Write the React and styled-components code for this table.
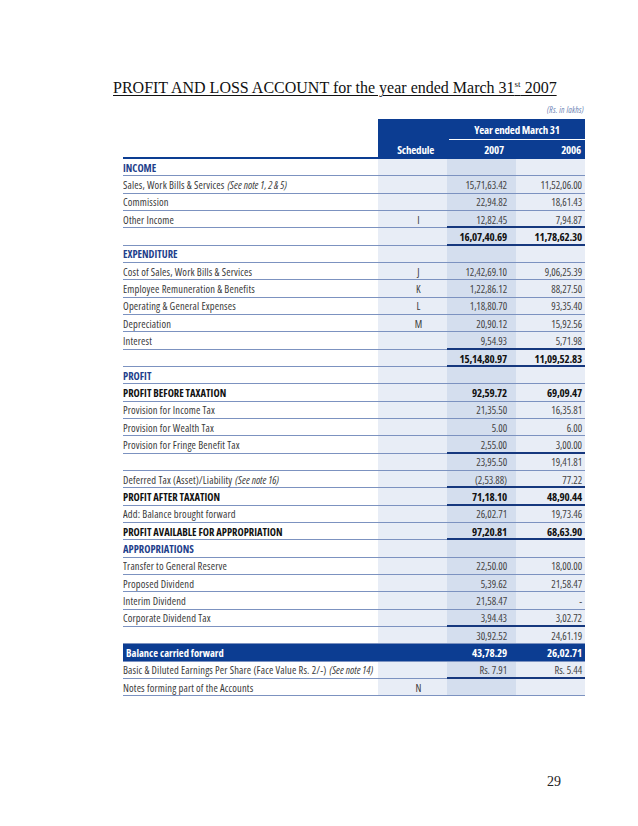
import styled, { createGlobalStyle } from "styled-components";

const GlobalStyle = createGlobalStyle`
  body {
    margin: 0;
    background: #ffffff;
  }
`;

const BLUE = "#0c3d92";
const THIN = "#7c92c0";
const THICK = "#16387e";
const COL = "#e8edf6";
const COL_DARK = "#d4deee";

const rows = [
  { kind: "section", label: "INCOME" },
  { label: "Sales, Work Bills & Services", note: "(See note 1, 2 & 5)", a: "15,71,63.42", b: "11,52,06.00" },
  { label: "Commission", a: "22,94.82", b: "18,61.43" },
  { label: "Other Income", sched: "I", a: "12,82.45", b: "7,94.87", rule: true },
  { kind: "total", a: "16,07,40.69", b: "11,78,62.30", rule: true },
  { kind: "section", label: "EXPENDITURE" },
  { label: "Cost of Sales, Work Bills & Services", sched: "J", a: "12,42,69.10", b: "9,06,25.39" },
  { label: "Employee Remuneration & Benefits", sched: "K", a: "1,22,86.12", b: "88,27.50" },
  { label: "Operating & General Expenses", sched: "L", a: "1,18,80.70", b: "93,35.40" },
  { label: "Depreciation", sched: "M", a: "20,90.12", b: "15,92.56" },
  { label: "Interest", a: "9,54.93", b: "5,71.98", rule: true },
  { kind: "total", a: "15,14,80.97", b: "11,09,52.83", rule: true },
  { kind: "section", label: "PROFIT" },
  { kind: "bold", label: "PROFIT BEFORE TAXATION", a: "92,59.72", b: "69,09.47" },
  { label: "Provision for Income Tax", a: "21,35.50", b: "16,35.81" },
  { label: "Provision for Wealth Tax", a: "5.00", b: "6.00" },
  { label: "Provision for Fringe Benefit Tax", a: "2,55.00", b: "3,00.00", rule: true },
  { a: "23,95.50", b: "19,41.81" },
  { label: "Deferred Tax (Asset)/Liability", note: "(See note 16)", a: "(2,53.88)", b: "77.22", rule: true },
  { kind: "bold", label: "PROFIT AFTER TAXATION", a: "71,18.10", b: "48,90.44", rule: true },
  { label: "Add: Balance brought forward", a: "26,02.71", b: "19,73.46" },
  { kind: "bold", label: "PROFIT AVAILABLE FOR APPROPRIATION", a: "97,20.81", b: "68,63.90", rule: true },
  { kind: "section", label: "APPROPRIATIONS" },
  { label: "Transfer to General Reserve", a: "22,50.00", b: "18,00.00" },
  { label: "Proposed Dividend", a: "5,39.62", b: "21,58.47" },
  { label: "Interim Dividend", a: "21,58.47", b: "-" },
  { label: "Corporate Dividend Tax", a: "3,94.43", b: "3,02.72", rule: true },
  { a: "30,92.52", b: "24,61.19" },
  { kind: "band", label: "Balance carried forward", a: "43,78.29", b: "26,02.71" },
  { label: "Basic & Diluted Earnings Per Share (Face Value Rs. 2/-)", note: "(See note 14)", a: "Rs. 7.91", b: "Rs. 5.44", rule: true },
  { label: "Notes forming part of the Accounts", sched: "N" },
];

const Page = styled.div`
  width: 638px;
  height: 826px;
  box-sizing: border-box;
  padding: 77px 0 0 113px;
  font-family: "Open Sans", "DejaVu Sans Condensed", sans-serif;
  font-stretch: 75%;
  position: relative;
`;

const Title = styled.h1`
  margin: 0;
  font-family: "Liberation Serif", "Times New Roman", serif;
  font-stretch: normal;
  font-weight: normal;
  font-size: 16px;
  line-height: 22px;
  color: #111;
  text-decoration: underline;
  text-underline-offset: 2px;
  text-decoration-thickness: 1px;
  sup {
    font-size: 9px;
    vertical-align: 6px;
    line-height: 0;
  }
`;

const Sheet = styled.div`
  width: 462px;
  margin: 5px 0 0 10px;
`;

const Unit = styled.div`
  text-align: right;
  font-style: italic;
  font-size: 8.5px;
  line-height: 12px;
  color: #6f86b6;
  padding-right: 1px;
  letter-spacing: 0.2px;
`;

const Head = styled.div`
  display: grid;
  grid-template-columns: 255px 69px 69px 69px;
  grid-template-rows: 21px 19px;
  margin-top: 3px;
`;

const HeadBlank = styled.div`
  grid-column: 1;
  grid-row: 1 / 3;
  box-shadow: inset 0 -2px 0 ${BLUE};
`;

const HeadBlue = styled.div`
  grid-column: ${(p) => p.$col};
  grid-row: ${(p) => p.$row};
  background: ${BLUE};
  color: #ffffff;
  font-weight: bold;
  font-size: 11px;
  letter-spacing: -0.2px;
  display: flex;
  align-items: center;
  justify-content: ${(p) => (p.$center ? "center" : "flex-end")};
  padding-right: ${(p) => p.$pad || 0}px;
`;

const YearSpan = styled.span`
  display: block;
  width: 136px;
  margin-left: 2px;
  text-align: center;
  line-height: 19px;
  border-bottom: 2px solid #ffffff;
  margin-top: 2px;
`;

const Row = styled.div`
  display: grid;
  grid-template-columns: 255px 69px 69px 69px;
  height: 17.33px;
  color: ${(p) => (p.$band ? "#ffffff" : "#3a3a3a")};
  background: ${(p) => (p.$band ? BLUE : "transparent")};
`;

const Cell = styled.div`
  display: flex;
  align-items: center;
  white-space: nowrap;
  overflow: hidden;
  background: ${(p) => (p.$band ? "transparent" : p.$bg || "transparent")};
  box-shadow: inset 0 -${(p) => (p.$thick ? 2 : 1)}px 0 ${(p) => (p.$thick ? THICK : THIN)};
  justify-content: ${(p) => p.$align || "flex-start"};
  padding-right: ${(p) => p.$pad || 0}px;
  padding-left: ${(p) => p.$padl || 0}px;
  font-weight: ${(p) => (p.$bold ? "bold" : "normal")};
  font-size: ${(p) => (p.$num && p.$bold ? 11 : 10.5)}px;
  letter-spacing: ${(p) => (p.$num ? (p.$bold ? "-0.2px" : "-0.1px") : p.$bold ? "0px" : "0.15px")};
  color: ${(p) => p.$color || "inherit"};
`;

const Note = styled.em`
  margin-left: 3px;
  font-size: 10.5px;
  letter-spacing: 0;
`;

const PageNo = styled.div`
  position: absolute;
  left: 547px;
  top: 774px;
  font-family: "Liberation Serif", "Times New Roman", serif;
  font-stretch: normal;
  font-size: 14px;
  color: #222;
`;

function LineRow({ r }) {
  const band = r.kind === "band";
  const section = r.kind === "section";
  const bold = r.kind === "bold" || r.kind === "total" || band;
  const numColor = band ? "#fff" : bold ? "#111" : "#444";
  return (
    <Row $band={band}>
      <Cell
        $bold={bold || section}
        $color={section ? "#1f3f8c" : band ? "#fff" : bold ? "#111" : undefined}
        $padl={band ? 3 : 0}
      >
        {r.label}
        {r.note && <Note>{r.note}</Note>}
      </Cell>
      <Cell $bg={COL} $band={band} $align="center" $padl={12}>
        {r.sched}
      </Cell>
      <Cell $num $bg={COL_DARK} $band={band} $align="flex-end" $pad={9} $bold={bold} $thick={r.rule} $color={numColor}>
        {r.a}
      </Cell>
      <Cell $num $bg={COL} $band={band} $align="flex-end" $pad={3} $bold={bold} $thick={r.rule} $color={numColor}>
        {r.b}
      </Cell>
    </Row>
  );
}

export default function App() {
  return (
    <Page>
      <GlobalStyle />
      <Title>
        PROFIT AND LOSS ACCOUNT for the year ended March 31<sup>st</sup> 2007
      </Title>
      <Sheet>
        <Unit>(Rs. in lakhs)</Unit>
        <Head>
          <HeadBlank />
          <HeadBlue $col="2" $row="1" />
          <HeadBlue $col="3 / 5" $row="1" $center>
            <YearSpan>Year ended March 31</YearSpan>
          </HeadBlue>
          <HeadBlue $col="2" $row="2" $pad={13}>Schedule</HeadBlue>
          <HeadBlue $col="3" $row="2" $pad={12}>2007</HeadBlue>
          <HeadBlue $col="4" $row="2" $pad={4}>2006</HeadBlue>
        </Head>
        {rows.map((r, i) => (
          <LineRow key={i} r={r} />
        ))}
      </Sheet>
      <PageNo>29</PageNo>
    </Page>
  );
}
